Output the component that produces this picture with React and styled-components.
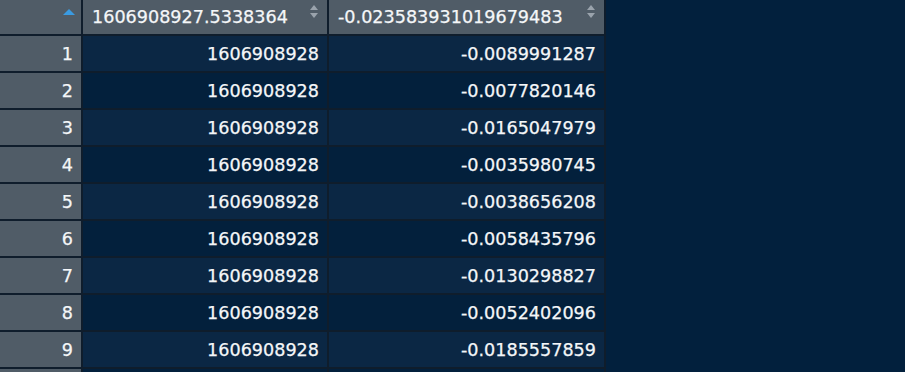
import React from "react";
import styled, { createGlobalStyle } from "styled-components";

const GlobalStyle = createGlobalStyle`
  html, body {
    margin: 0;
    padding: 0;
    background: #02203d;
    overflow: hidden;
  }
`;

const Page = styled.div`
  width: 905px;
  height: 372px;
  overflow: hidden;
  background: #02203d;
  font-family: "DejaVu Sans", Verdana, sans-serif;
  font-size: 17.6px;
  color: #f4f6f8;
  -webkit-text-stroke: 0.25px #f4f6f8;
`;

const Grid = styled.div`
  display: inline-grid;
  grid-template-columns: 81px 244px 275px;
  grid-auto-rows: 35px;
  grid-template-rows: 34px;
  gap: 2px;
  background: #0f1d2c;
  padding-right: 2px;
`;

const HeadCell = styled.div`
  position: relative;
  display: flex;
  align-items: center;
  background: #505c67;
  padding: 0 9px;
  white-space: nowrap;
`;

const RowNum = styled.div`
  display: flex;
  align-items: center;
  justify-content: flex-end;
  padding-right: 8px;
  background: #505c67;
`;

const Cell = styled.div`
  display: flex;
  align-items: center;
  justify-content: flex-end;
  padding-right: 8px;
  background: ${({ $odd }) => ($odd ? "#0b2744" : "#03203c")};
  white-space: nowrap;
`;

const SortIcon = styled.svg`
  position: absolute;
  right: ${({ $right }) => $right}px;
  top: ${({ $top }) => $top}px;
`;

const rows = [
  ["1606908928", "-0.0089991287"],
  ["1606908928", "-0.0077820146"],
  ["1606908928", "-0.0165047979"],
  ["1606908928", "-0.0035980745"],
  ["1606908928", "-0.0038656208"],
  ["1606908928", "-0.0058435796"],
  ["1606908928", "-0.0130298827"],
  ["1606908928", "-0.0052402096"],
  ["1606908928", "-0.0185557859"]
];

const BothArrows = () => (
  <SortIcon $right={9} $top={5} width="8" height="13" viewBox="0 0 8 13">
    <path d="M4 0 L8 5 L0 5 Z" fill="#9aa3ac" />
    <path d="M0 8 L8 8 L4 13 Z" fill="#9aa3ac" />
  </SortIcon>
);

export default function App() {
  return (
    <Page>
      <GlobalStyle />
      <Grid>
        <HeadCell>
          <SortIcon $right={6} $top={9} width="12" height="6" viewBox="0 0 12 6">
            <path d="M6 0 L12 6 L0 6 Z" fill="#3a9be2" />
          </SortIcon>
        </HeadCell>
        <HeadCell>
          1606908927.5338364
          <BothArrows />
        </HeadCell>
        <HeadCell>
          -0.023583931019679483
          <BothArrows />
        </HeadCell>
        {rows.map(([a, b], i) => (
          <React.Fragment key={i}>
            <RowNum>{i + 1}</RowNum>
            <Cell $odd={i % 2 === 0}>{a}</Cell>
            <Cell $odd={i % 2 === 0}>{b}</Cell>
          </React.Fragment>
        ))}
        {/* next row, only its top edge shows in the frame */}
        <RowNum />
        <Cell />
        <Cell />
      </Grid>
    </Page>
  );
}
